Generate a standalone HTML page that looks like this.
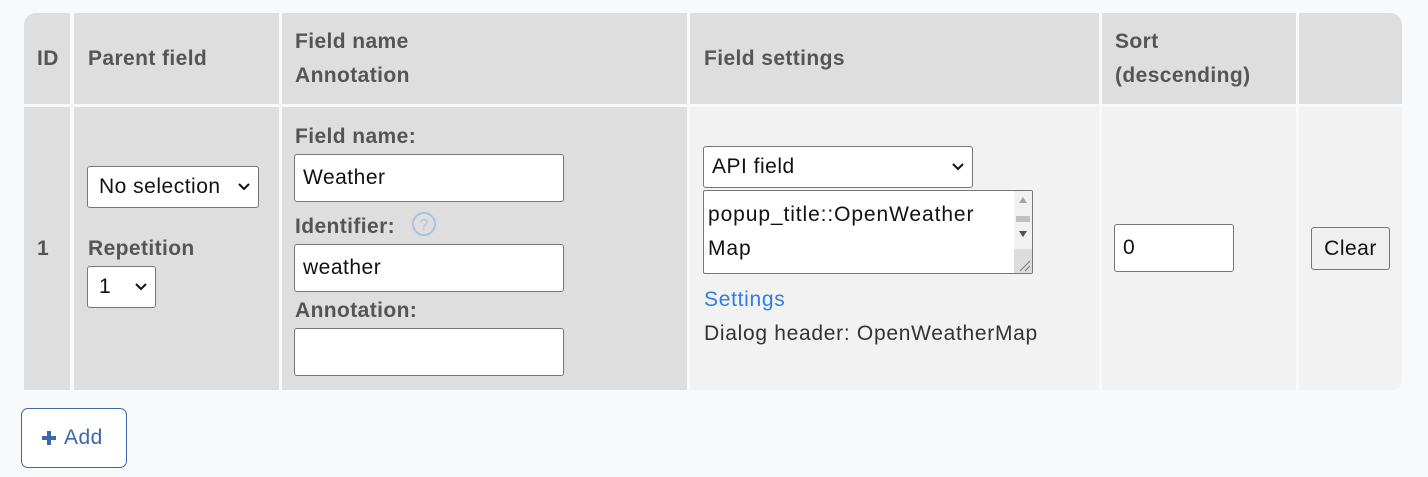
<!DOCTYPE html>
<html><head><style>
body{margin:0;width:1428px;height:477px;background:#f8f9fb;font-family:"Liberation Sans",sans-serif;position:relative;overflow:hidden}
.c{position:absolute;background:#dedede}
.l{background:#f2f2f2}
.h{position:absolute;font-size:21px;font-weight:bold;color:#555;line-height:34px;letter-spacing:0.4px;white-space:nowrap}
.t{position:absolute;font-size:21px;color:#222;white-space:nowrap;letter-spacing:0.7px}
.box{position:absolute;background:#fff;border:1px solid #767676;border-radius:3px;box-sizing:border-box;font-size:21px;letter-spacing:0.5px;color:#111;padding-left:8px;display:flex;align-items:center;white-space:nowrap}
.ch{position:absolute;right:8px;top:50%;margin-top:-5px}
</style></head><body>
<div class="c" style="left:24px;top:13px;width:46px;height:91px;border-top-left-radius:12px"></div>
<div class="c" style="left:74px;top:13px;width:205px;height:91px"></div>
<div class="c" style="left:282px;top:13px;width:405px;height:91px"></div>
<div class="c" style="left:690px;top:13px;width:409px;height:91px"></div>
<div class="c" style="left:1102px;top:13px;width:194px;height:91px"></div>
<div class="c" style="left:1299px;top:13px;width:103px;height:91px;border-top-right-radius:12px"></div>
<div class="c" style="left:24px;top:107px;width:46px;height:283px"></div>
<div class="c" style="left:74px;top:107px;width:205px;height:283px"></div>
<div class="c" style="left:282px;top:107px;width:405px;height:283px"></div>
<div class="c l" style="left:690px;top:107px;width:409px;height:283px"></div>
<div class="c l" style="left:1102px;top:107px;width:194px;height:283px"></div>
<div class="c l" style="left:1299px;top:107px;width:103px;height:283px;border-bottom-right-radius:10px"></div>

<div class="h" style="left:37px;top:42px">ID</div>
<div class="h" style="left:88px;top:42px">Parent field</div>
<div class="h" style="left:295px;top:25px">Field name<br>Annotation</div>
<div class="h" style="left:704px;top:42px">Field settings</div>
<div class="h" style="left:1115px;top:25px">Sort<br>(descending)</div>

<div class="h" style="left:37px;top:232px">1</div>
<div class="box" style="left:87px;top:166px;width:172px;height:42px;padding-left:11px">No selection<svg class="ch" width="12" height="9"><path d="M1 2l5 5 5-5" stroke="#111" stroke-width="2" fill="none"/></svg></div>
<div class="h" style="left:88px;top:232px">Repetition</div>
<div class="box" style="left:87px;top:266px;width:69px;height:42px;padding-left:11px">1<svg class="ch" width="12" height="9"><path d="M1 2l5 5 5-5" stroke="#111" stroke-width="2" fill="none"/></svg></div>

<div class="h" style="left:295px;top:120px">Field name:</div>
<div class="box" style="left:294px;top:154px;width:270px;height:48px">Weather</div>
<div class="h" style="left:295px;top:210px">Identifier:</div>
<svg style="position:absolute;left:411px;top:211px" width="26" height="26"><circle cx="13" cy="13" r="11" fill="none" stroke="#a9c2e3" stroke-width="2"/><text x="13" y="19" font-size="16" text-anchor="middle" fill="#a9c2e3" font-family="Liberation Sans">?</text></svg>
<div class="box" style="left:294px;top:244px;width:270px;height:48px">weather</div>
<div class="h" style="left:295px;top:294px">Annotation:</div>
<div class="box" style="left:294px;top:328px;width:270px;height:48px"></div>

<div class="box" style="left:703px;top:146px;width:270px;height:42px">API field<svg class="ch" width="12" height="9"><path d="M1 2l5 5 5-5" stroke="#111" stroke-width="2" fill="none"/></svg></div>
<div class="box" style="left:703px;top:190px;width:330px;height:84px;padding-left:4px;display:block;line-height:34px;padding-top:7px;border-radius:2px;letter-spacing:0.9px">popup_title::OpenWeather<br>Map
<div style="position:absolute;right:0;top:0;width:18px;height:82px;background:#f1f1f1"><svg width="18" height="82"><path d="M5 12h8l-4-6z" fill="#a3a3a3"/><rect x="2" y="25" width="14" height="6" fill="#c1c1c1"/><path d="M5 40h8l-4 6z" fill="#505050"/><rect x="0" y="58" width="18" height="24" fill="#dcdcdc"/><path d="M6 80l10-10M11 80l5-5" stroke="#777" stroke-width="1"/></svg></div></div>
<div class="t" style="left:704px;top:288px;color:#2f7de1">Settings</div>
<div class="t" style="left:704px;top:322px;color:#333">Dialog header: OpenWeatherMap</div>

<div class="box" style="left:1114px;top:224px;width:120px;height:48px">0</div>
<div class="box" style="left:1311px;top:227px;width:79px;height:43px;background:#efefef;padding:0;justify-content:center">Clear</div>

<div class="box" style="left:21px;top:408px;width:106px;height:60px;border-color:#3a67ad;border-radius:7px;background:#fff;color:#3a67ad;padding-left:18px"><svg width="18" height="18" style="margin-right:6px"><path d="M9 2v14M2 9h14" stroke="#3a67ad" stroke-width="4"/></svg>Add</div>
</body></html>
